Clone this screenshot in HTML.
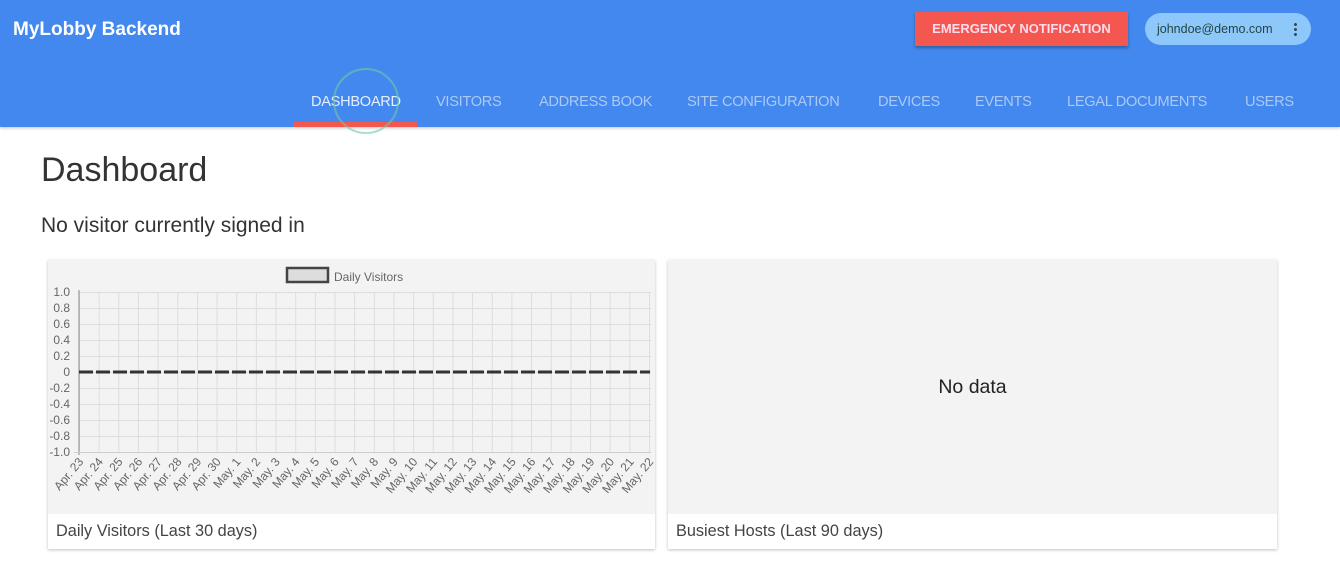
<!DOCTYPE html>
<html><head><meta charset="utf-8"><style>
*{margin:0;padding:0;box-sizing:border-box}
body{width:1340px;height:563px;background:#fff;font-family:"Liberation Sans",sans-serif;position:relative;overflow:hidden}
.hdr{position:absolute;left:0;top:0;width:1340px;height:127px;background:#4388ee;box-shadow:0 1px 3px rgba(0,0,0,.25)}
.logo{position:absolute;left:13px;top:19px;color:#fff;font-size:19px;font-weight:bold}
.emer{position:absolute;left:915px;top:12px;width:213px;height:34px;background:#f4574f;color:#fde;font-size:13px;font-weight:bold;text-align:center;line-height:33px;box-shadow:0 2px 3px rgba(0,0,0,.3)}
.user{position:absolute;left:1145px;top:13px;width:166px;height:32px;background:#8ec8fb;border-radius:16px;color:#244;font-size:12.5px;line-height:32px;padding-left:12px}
.user i{position:absolute;right:14px;top:9px;width:3px;height:14px;background:radial-gradient(circle,#345 1.3px,transparent 1.6px) 0 0/3px 5px}
.nav{position:absolute;top:94px;font-size:14.6px;color:#aac9f7;letter-spacing:-.3px}
.ul{position:absolute;left:293px;top:122px;width:124px;height:5px;background:#f4574f}
h1{position:absolute;left:41px;top:151px;font-size:34px;font-weight:normal;color:#333}
.sub{position:absolute;left:41px;top:214px;font-size:21px;color:#333}
.card{position:absolute;top:260px;height:289px;background:#f3f3f3;box-shadow:0 1px 3px rgba(0,0,0,.25)}
.foot{position:absolute;left:0;bottom:0;width:100%;height:35px;background:#fff;font-size:16.3px;color:#444;padding:8px 8px}
</style></head><body>
<div class="hdr">
<div class="logo">MyLobby Backend</div>
<div class="emer">EMERGENCY NOTIFICATION</div>
<div class="user">johndoe@demo.com<i></i></div>
<span class="nav" style="left:311px;color:#e6efff">DASHBOARD</span>
<span class="nav" style="left:436px">VISITORS</span>
<span class="nav" style="left:539px">ADDRESS BOOK</span>
<span class="nav" style="left:687px">SITE CONFIGURATION</span>
<span class="nav" style="left:878px">DEVICES</span>
<span class="nav" style="left:975px">EVENTS</span>
<span class="nav" style="left:1067px">LEGAL DOCUMENTS</span>
<span class="nav" style="left:1245px">USERS</span>
<div class="ul"></div>
<div style="position:absolute;left:333px;top:68px;width:66px;height:66px;border:2px solid rgba(120,200,160,.6);border-radius:50%"></div>
</div>
<h1>Dashboard</h1>
<div class="sub">No visitor currently signed in</div>
<div class="card" style="left:48px;width:607px">
<div class="foot">Daily Visitors (Last 30 days)</div>
</div>
<div class="card" style="left:668px;width:609px">
<div style="position:absolute;left:0;top:116px;width:100%;text-align:center;font-size:19.5px;color:#222">No data</div>
<div class="foot">Busiest Hosts (Last 90 days)</div>
</div>
<svg style="position:absolute;left:0;top:0" width="1340" height="563" font-family="Liberation Sans, sans-serif">
<defs><pattern id="g" x="79" y="292" width="19.655" height="16" patternUnits="userSpaceOnUse"><path d="M0.5 0V16M0 0.5H19.655" stroke="#ddd" fill="none"/></pattern></defs>
<rect x="79" y="292" width="572" height="161" fill="url(#g)"/>
<line x1="79" y1="290" x2="79" y2="455" stroke="#888"/>
<line x1="74" y1="452.5" x2="651" y2="452.5" stroke="#ccc"/>
<line x1="79" y1="372" x2="650" y2="372" stroke="#333" stroke-width="3" stroke-dasharray="14 3"/>
<rect x="287" y="268" width="41" height="14" fill="#ddd" stroke="#444" stroke-width="2.5"/>
<text x="334" y="281" font-size="12" fill="#666">Daily Visitors</text>
<g font-size="12" fill="#666" text-anchor="end">
<text x="70" y="296">1.0</text><text x="70" y="312">0.8</text><text x="70" y="328">0.6</text><text x="70" y="344">0.4</text><text x="70" y="360">0.2</text><text x="70" y="376">0</text><text x="70" y="392">-0.2</text><text x="70" y="408">-0.4</text><text x="70" y="424">-0.6</text><text x="70" y="440">-0.8</text><text x="70" y="456">-1.0</text>
</g>
<g font-size="12" fill="#666" text-anchor="end">
<g transform="translate(84,462) rotate(-50)"><text>Apr. 23</text></g>
<g transform="translate(103.7,462) rotate(-50)"><text>Apr. 24</text></g>
<g transform="translate(123.3,462) rotate(-50)"><text>Apr. 25</text></g>
<g transform="translate(143,462) rotate(-50)"><text>Apr. 26</text></g>
<g transform="translate(162.6,462) rotate(-50)"><text>Apr. 27</text></g>
<g transform="translate(182.3,462) rotate(-50)"><text>Apr. 28</text></g>
<g transform="translate(202,462) rotate(-50)"><text>Apr. 29</text></g>
<g transform="translate(221.6,462) rotate(-50)"><text>Apr. 30</text></g>
<g transform="translate(241.3,462) rotate(-50)"><text>May. 1</text></g>
<g transform="translate(260.9,462) rotate(-50)"><text>May. 2</text></g>
<g transform="translate(280.6,462) rotate(-50)"><text>May. 3</text></g>
<g transform="translate(300.3,462) rotate(-50)"><text>May. 4</text></g>
<g transform="translate(319.9,462) rotate(-50)"><text>May. 5</text></g>
<g transform="translate(339.6,462) rotate(-50)"><text>May. 6</text></g>
<g transform="translate(359.2,462) rotate(-50)"><text>May. 7</text></g>
<g transform="translate(378.9,462) rotate(-50)"><text>May. 8</text></g>
<g transform="translate(398.6,462) rotate(-50)"><text>May. 9</text></g>
<g transform="translate(418.2,462) rotate(-50)"><text>May. 10</text></g>
<g transform="translate(437.9,462) rotate(-50)"><text>May. 11</text></g>
<g transform="translate(457.6,462) rotate(-50)"><text>May. 12</text></g>
<g transform="translate(477.2,462) rotate(-50)"><text>May. 13</text></g>
<g transform="translate(496.9,462) rotate(-50)"><text>May. 14</text></g>
<g transform="translate(516.5,462) rotate(-50)"><text>May. 15</text></g>
<g transform="translate(536.2,462) rotate(-50)"><text>May. 16</text></g>
<g transform="translate(555.9,462) rotate(-50)"><text>May. 17</text></g>
<g transform="translate(575.5,462) rotate(-50)"><text>May. 18</text></g>
<g transform="translate(595.2,462) rotate(-50)"><text>May. 19</text></g>
<g transform="translate(614.8,462) rotate(-50)"><text>May. 20</text></g>
<g transform="translate(634.5,462) rotate(-50)"><text>May. 21</text></g>
<g transform="translate(654.1,462) rotate(-50)"><text>May. 22</text></g>
</g>
</svg>
</body></html>
